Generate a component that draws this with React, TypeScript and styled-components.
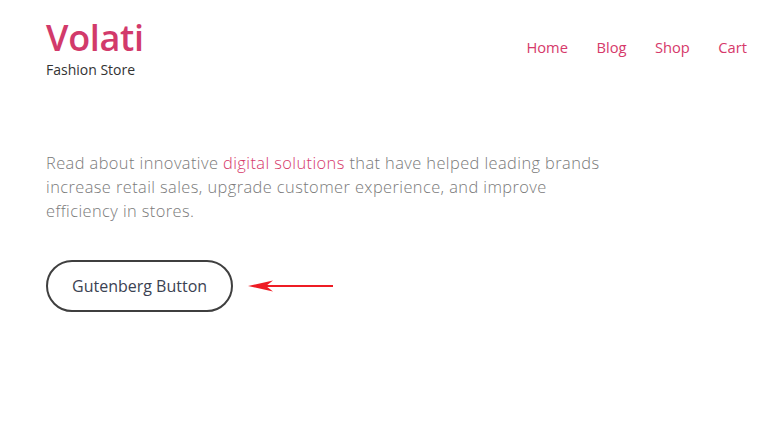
import React, { ReactElement } from "react";
import styled, { createGlobalStyle } from "styled-components";

const GlobalStyle = createGlobalStyle`
    html, body {
        margin: 0;
        padding: 0;
        background: #ffffff;
    }
    body {
        font-family: "Open Sans", "Noto Sans", sans-serif;
    }
`;

const Page = styled.div`
    width: 768px;
    height: 426px;
    box-sizing: border-box;
    padding: 14px 21px 0px 46px;
    overflow: hidden;
`;

const Header = styled.header`
    display: flex;
    align-items: flex-start;
    justify-content: space-between;
`;

const Brand = styled.div`
    display: flex;
    flex-direction: column;
`;

const Logo = styled.h1`
    margin: 0;
    font-family: "Open Sans", sans-serif;
    font-weight: 600;
    font-size: 36px;
    line-height: 48px;
    color: #d23a6b;
    letter-spacing: -0.3px;
`;

const Tagline = styled.span`
    font-family: "Open Sans", sans-serif;
    font-size: 14px;
    line-height: 18px;
    color: #333333;
    margin-top: -1px;
`;

const Nav = styled.nav`
    display: flex;
    gap: 28.5px;
    margin-top: 23px;
`;

const NavLink = styled.a`
    font-family: "Open Sans", sans-serif;
    font-size: 14.7px;
    line-height: 20px;
    color: #d6396a;
    text-decoration: none;
`;

const Content = styled.main`
    margin-top: 72px;
`;

const Lead = styled.p`
    margin: 0;
    width: 560px;
    font-family: "Open Sans", sans-serif;
    font-weight: 300;
    font-size: 16.4px;
    line-height: 24px;
    letter-spacing: 0.42px;
    color: #7a7a7a;

    & a {
        color: #d6396a;
        text-decoration: none;
    }
`;

const ButtonRow = styled.div`
    display: flex;
    align-items: center;
    gap: 14px;
    margin-top: 37px;
`;

const PillButton = styled.button`
    height: 52px;
    padding: 0px 24px;
    border: 2px solid #3f3f3f;
    border-radius: 26px;
    background: transparent;
    font-family: "Open Sans", sans-serif;
    font-size: 16px;
    color: #3b4252;
    cursor: pointer;
`;

const Arrow = () => (
    <svg width="88" height="14" viewBox="0 0 88 14">
        <line x1="12" y1="7" x2="86" y2="7" stroke="#ee1c24" strokeWidth="1.8" />
        <path d="M1 7 L26 1.5 L19 7 L26 12.5 Z" fill="#ee1c24" />
    </svg>
);

const App: React.FC<{}> = (): ReactElement => {
    return (
        <>
            <GlobalStyle />
            <Page>
                <Header>
                    <Brand>
                        <Logo>Volati</Logo>
                        <Tagline>Fashion Store</Tagline>
                    </Brand>
                    <Nav>
                        <NavLink href="#">Home</NavLink>
                        <NavLink href="#">Blog</NavLink>
                        <NavLink href="#">Shop</NavLink>
                        <NavLink href="#">Cart</NavLink>
                    </Nav>
                </Header>
                <Content>
                    <Lead>
                        Read about innovative <a href="#">digital solutions</a> that have helped leading brands
                        increase retail sales, upgrade customer experience, and improve efficiency in stores.
                    </Lead>
                    <ButtonRow>
                        <PillButton>Gutenberg Button</PillButton>
                        <Arrow />
                    </ButtonRow>
                </Content>
            </Page>
        </>
    );
};

export default App;
